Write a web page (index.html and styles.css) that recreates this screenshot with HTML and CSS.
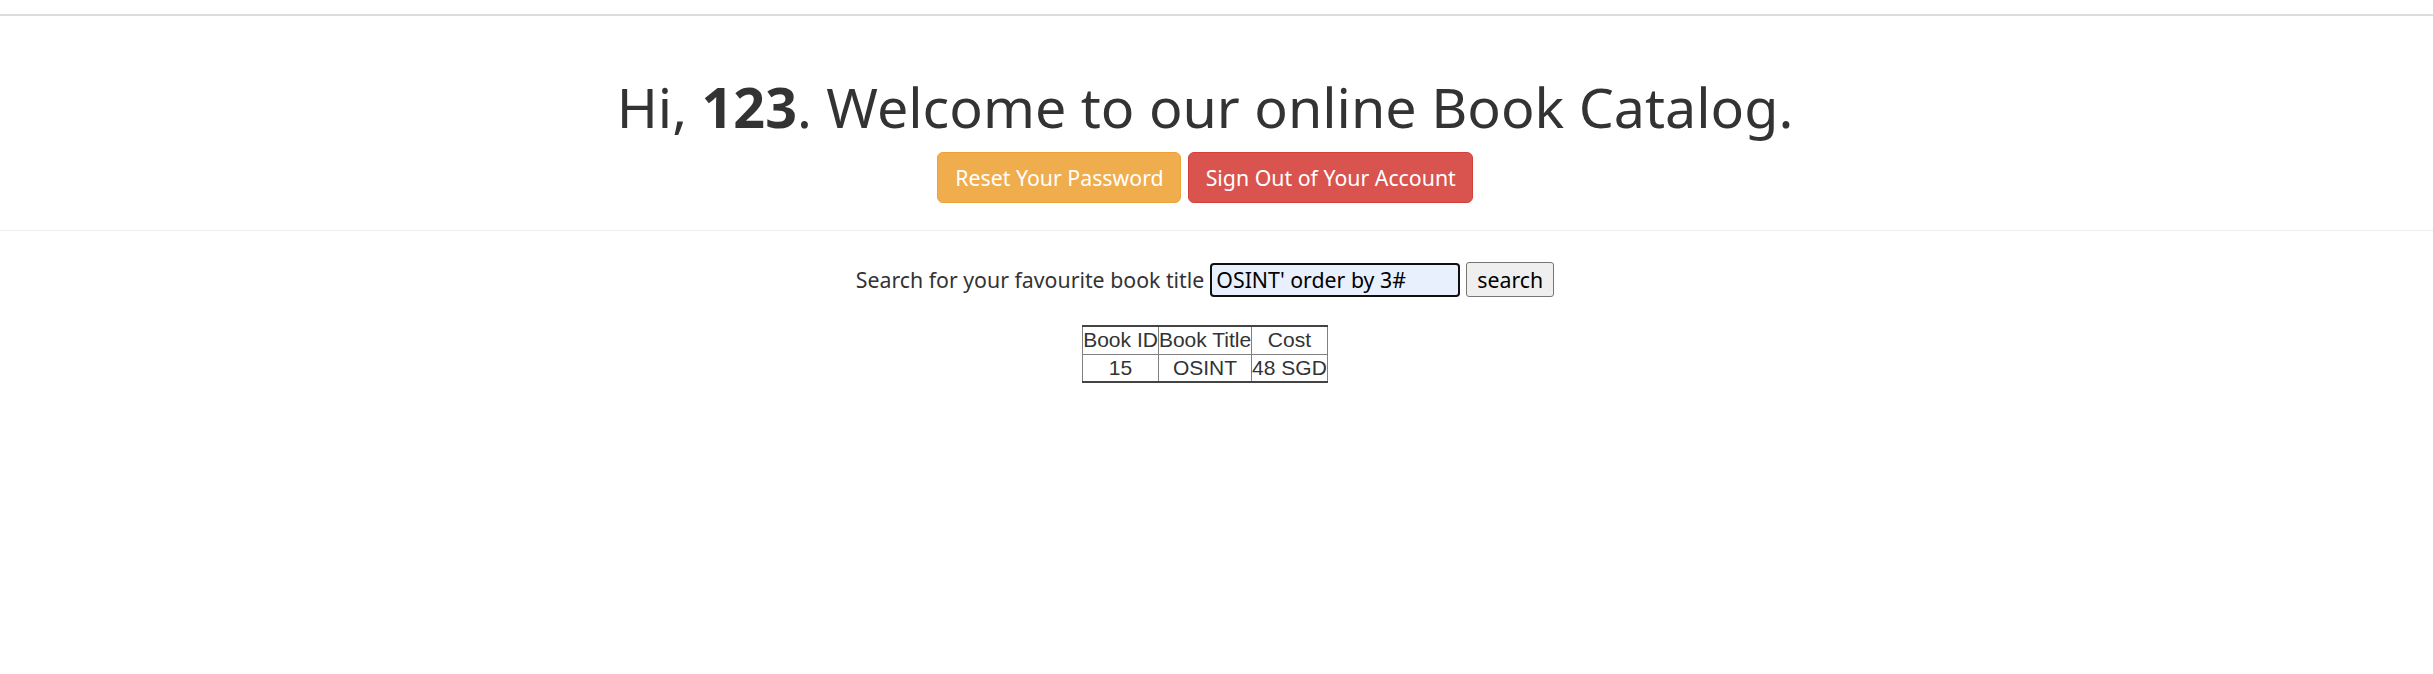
FILE: index.html
```html
<!DOCTYPE html>
<html>
<head>
<meta charset="utf-8">
<title>Welcome</title>
<link rel="stylesheet" href="styles.css">
</head>
<body>
<div class="topbar"></div>
<div class="page">
  <div class="page-header">
    <h1 class="title">Hi, <b>123</b>. Welcome to our online Book Catalog.</h1>
    <p class="actions">
      <a class="btn btn-warning" href="#">Reset Your Password</a>
      <a class="btn btn-danger" href="#">Sign Out of Your Account</a>
    </p>
  </div>
  <form class="search">
    <label class="search-label">Search for your favourite book title</label>
    <input class="search-input" type="text" value="OSINT' order by 3#">
    <button class="search-btn" type="button">search</button>
  </form>
  <div class="results">
    <table class="books">
      <tr><td>Book ID</td><td>Book Title</td><td>Cost</td></tr>
      <tr><td>15</td><td>OSINT</td><td>48 SGD</td></tr>
    </table>
  </div>
</div>
</body>
</html>
```
FILE: styles.css
```css
* { box-sizing: border-box; }
html, body { margin: 0; padding: 0; background: #fff; }
body {
  font-family: "Noto Sans", sans-serif;
  font-size: 21.3px;
  color: #333;
}
.topbar { height: 16px; border-bottom: 2px solid #dcdcdc; }
.page { text-align: center; }
.page-header { border-bottom: 1px solid #eee; padding: 0 23px 27px 0; }
.title {
  margin: 0;
  padding-top: 60px;
  font-size: 55.6px;
  font-weight: 400;
  line-height: 1.1;
}
.title b { font-weight: 700; }
.actions { margin: 15px 0 0; display: flex; justify-content: center; gap: 7px; }
.btn {
  display: inline-block;
  height: 51px;
  padding: 0 16px 0 17px;
  line-height: 49px;
  border: 1px solid transparent;
  border-radius: 6px;
  color: #fff;
  text-decoration: none;
  font-size: 21.3px;
}
.btn-warning { background: #f0ad4e; border-color: #eea236; }
.btn-danger { background: #d9534f; border-color: #d43f3a; }
.search { margin-top: 31px; padding-right: 23px; display: flex; justify-content: center; align-items: center; gap: 6px; }
.search-input {
  width: 250px; height: 34px;
  font: inherit; color: #000;
  background: #e8f0fe;
  border: 2px solid #101010; border-radius: 4px;
  padding: 0 4px;
  outline: none;
}
.search-btn {
  height: 35px; padding: 0 10px;
  font: inherit; color: #000;
  background: #efefef; border: 1px solid #767676; border-radius: 3px;
}
.results { padding-right: 23px; margin-top: 28px; }
.books {
  margin: 0 auto;
  border-collapse: collapse;
  font-family: "Liberation Sans", Arial, sans-serif;
  font-size: 21px;
  border-top: 2px solid #444;
  border-bottom: 2px solid #444;
  border-left: 1px solid #666;
  border-right: 1px solid #666;
}
.books td { border: 1px solid #808080; padding: 0; height: 28px; line-height: 26px; text-align: center; }
```
